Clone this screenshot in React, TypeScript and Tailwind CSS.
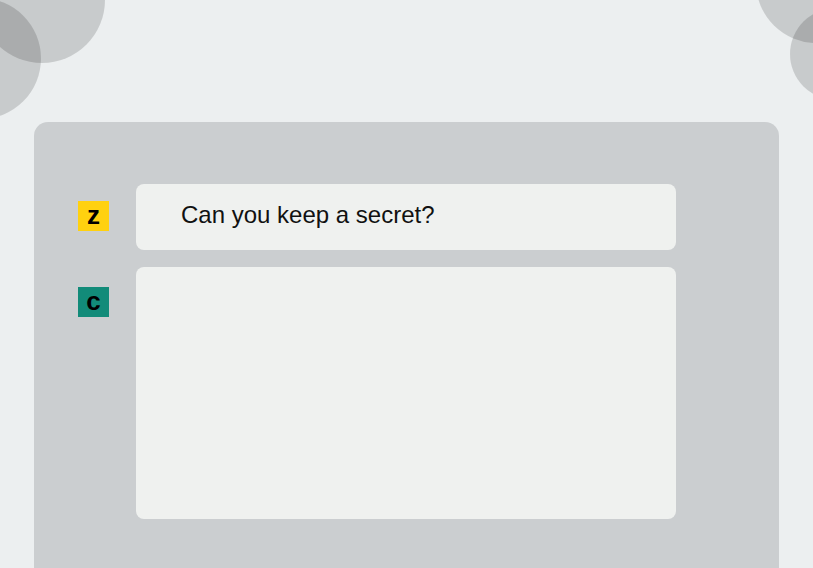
export default function App() {
  return (
    <div className="relative h-[568px] w-full overflow-hidden bg-[#eceff0] font-['Liberation_Sans',Arial,sans-serif]">
      {/* decorative circles */}
      <div className="absolute left-[-21px] top-[-63px] h-[126px] w-[126px] rounded-full bg-black/15" />
      <div className="absolute left-[-80px] top-[-2px] h-[121px] w-[121px] rounded-full bg-black/15" />
      <div className="absolute left-[756px] top-[-78px] h-[121px] w-[121px] rounded-full bg-black/15" />
      <div className="absolute left-[790px] top-[8px] h-[92px] w-[92px] rounded-full bg-black/15" />

      <div className="relative pt-[122px] px-[34px]">
        <div className="h-[446px] w-[745px] rounded-t-[14px] bg-[#cbced0] pl-[44px] pt-[62px]">
          <div className="flex items-start gap-[27px]">
            <div className="mt-[17px] flex h-[30px] w-[31px] items-center justify-center bg-[#ffd10f] text-[26px] font-bold leading-none text-black">
              <span className="-mt-[3px]">z</span>
            </div>
            <div className="flex h-[66px] w-[540px] items-center rounded-[8px] bg-[#eff1ef] pl-[45px] text-[24px] text-[#111]">
              <span className="-mt-[4px]">Can you keep a secret?</span>
            </div>
          </div>
          <div className="mt-[17px] flex items-start gap-[27px]">
            <div className="mt-[20px] flex h-[30px] w-[31px] items-center justify-center bg-[#128b79] text-[26px] font-bold leading-none text-black">
              <span className="-mt-[3px]">c</span>
            </div>
            <div className="h-[252px] w-[540px] rounded-[8px] bg-[#eff1ef]" />
          </div>
        </div>
      </div>
    </div>
  );
}
